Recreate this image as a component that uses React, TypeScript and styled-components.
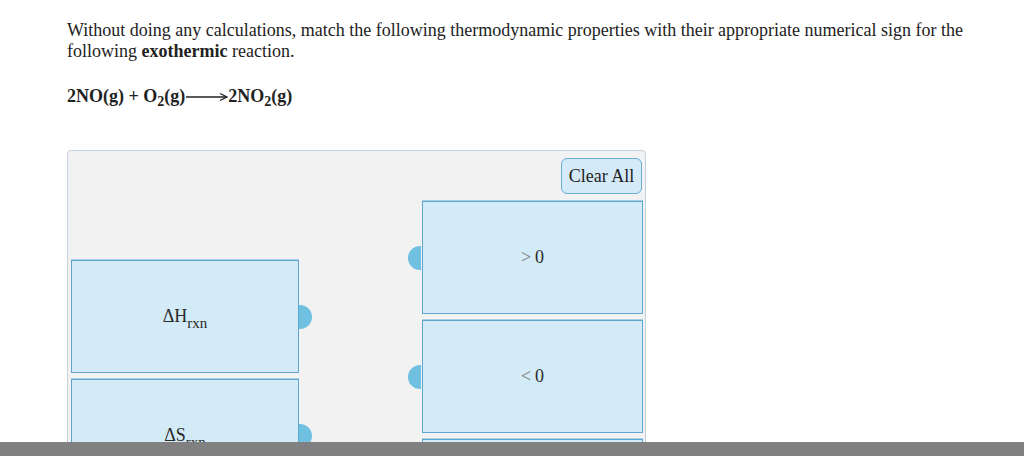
import React from "react";
import styled, { createGlobalStyle } from "styled-components";

const GlobalStyle = createGlobalStyle`
  html, body {
    margin: 0;
    padding: 0;
    background: #ffffff;
    overflow: hidden;
  }
  body {
    font-family: "Liberation Serif", "Times New Roman", serif;
    color: #222222;
  }
`;

const Page = styled.div`
  padding: 20px 0 0 67px;
  width: 1024px;
  height: 456px;
  box-sizing: border-box;
  overflow: hidden;
`;

const Prompt = styled.p`
  margin: 0;
  width: 920px;
  font-size: 18px;
  line-height: 21px;
`;

const Equation = styled.p`
  margin: 24px 0 0;
  font-size: 18px;
  line-height: 20px;
  font-weight: bold;
  display: flex;
  align-items: baseline;
`;

const Chem = styled.sub`
  font-size: 14px;
  vertical-align: -4px;
  line-height: 0;
`;

const Arrow = styled.svg`
  width: 42px;
  height: 10px;
  margin: 0 0 0 1px;
  align-self: center;
  position: relative;
  top: 1px;
`;

const Panel = styled.div`
  margin-top: 44px;
  width: 579px;
  box-sizing: border-box;
  border: 1px solid #c5d2de;
  border-radius: 4px;
  background: #f2f2f2;
  padding: 7px 2px 40px 2px;
`;

const Toolbar = styled.div`
  display: flex;
  justify-content: flex-end;
  padding-right: 1px;
`;

const ClearButton = styled.button`
  width: 81px;
  height: 36px;
  box-sizing: border-box;
  border: 1px solid #6aaed6;
  border-radius: 6px;
  background: #d4eaf8;
  font-family: "Liberation Serif", "Times New Roman", serif;
  font-size: 18px;
  color: #222222;
  padding: 0;
  cursor: pointer;
`;

const Columns = styled.div`
  display: flex;
  justify-content: space-between;
  margin-top: 7px;
`;

const Column = styled.div<{ $offset: number }>`
  display: flex;
  flex-direction: column;
  gap: 6px;
  padding-top: ${(p) => p.$offset}px;
`;

const Card = styled.div<{ $width: number; $side: "left" | "right" }>`
  position: relative;
  width: ${(p) => p.$width}px;
  height: 113px;
  box-sizing: border-box;
  border: 1px solid #5fa5cc;
  box-shadow: 0 -1px 0 #a9d0e6;
  background: #d3eaf7;
  display: flex;
  align-items: center;
  justify-content: center;
  font-size: 18px;
  color: #2a2a2a;
  margin-left: ${(p) => (p.$side === "left" ? 1 : 0)}px;
`;

const Knob = styled.span<{ $side: "left" | "right" }>`
  position: absolute;
  top: 50%;
  width: 13px;
  height: 24px;
  margin-top: -12px;
  background: #6fc0e1;
  ${(p) =>
    p.$side === "right"
      ? "right: -14px; border-radius: 0 12px 12px 0;"
      : "left: -15px; border-radius: 12px 0 0 12px;"}
`;

const Sub = styled.sub`
  font-size: 15px;
  vertical-align: -6px;
  line-height: 0;
`;

const Relation = styled.span`
  color: #7a7a7a;
  margin-right: 4px;
`;

const BottomBar = styled.div`
  position: fixed;
  left: 0;
  right: 0;
  bottom: 0;
  height: 14px;
  background: #808080;
`;

const terms = ["H", "S", "G"];
const signs = [">", "<", "="];

export default function App() {
  return (
    <>
      <GlobalStyle />
      <Page>
        <Prompt>
          Without doing any calculations, match the following thermodynamic
          properties with their appropriate numerical sign for the following{" "}
          <b>exothermic</b> reaction.
        </Prompt>
        <Equation>
          <span>
            2NO(g) + O<Chem>2</Chem>(g)
          </span>
          <Arrow viewBox="0 0 42 10" aria-hidden="true">
            <line x1="0" y1="5" x2="40" y2="5" stroke="#222" strokeWidth="1.3" />
            <path d="M34 1.5 L41 5 L34 8.5" fill="none" stroke="#222" strokeWidth="1.3" />
          </Arrow>
          <span>
            2NO<Chem>2</Chem>(g)
          </span>
        </Equation>
        <Panel>
          <Toolbar>
            <ClearButton>Clear All</ClearButton>
          </Toolbar>
          <Columns>
            <Column $offset={59}>
              {terms.map((t) => (
                <Card key={t} $width={228} $side="left">
                  <span>
                    Δ{t}
                    <Sub>rxn</Sub>
                  </span>
                  <Knob $side="right" />
                </Card>
              ))}
            </Column>
            <Column $offset={0}>
              {signs.map((s) => (
                <Card key={s} $width={221} $side="right">
                  <span>
                    <Relation>{s}</Relation>0
                  </span>
                  <Knob $side="left" />
                </Card>
              ))}
            </Column>
          </Columns>
        </Panel>
      </Page>
      <BottomBar />
    </>
  );
}
